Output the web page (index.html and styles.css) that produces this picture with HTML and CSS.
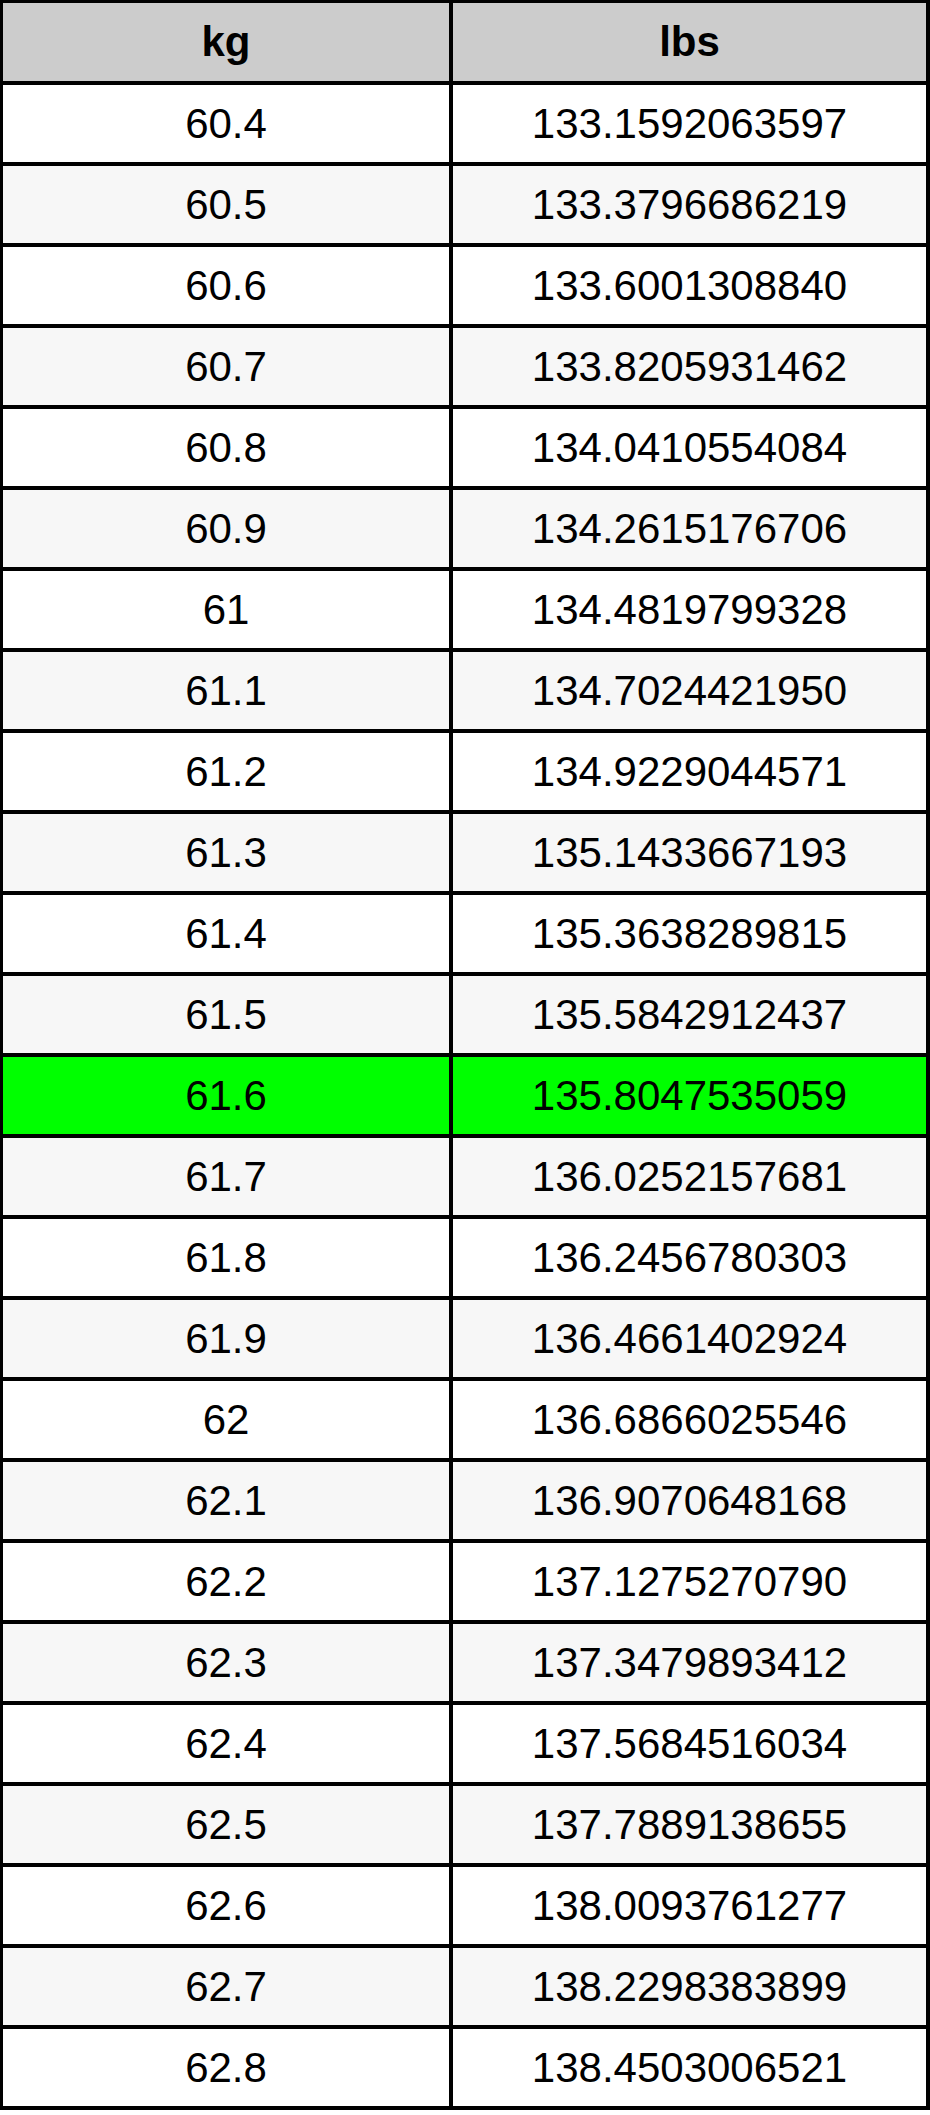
FILE: index.html
```html
<!DOCTYPE html>
<html>
<head>
<meta charset="utf-8">
<link rel="stylesheet" href="styles.css">
</head>
<body>
<div class="table">
  <div class="cell head">kg</div><div class="cell head">lbs</div>
  <div class="cell odd">60.4</div><div class="cell odd">133.1592063597</div>
  <div class="cell even">60.5</div><div class="cell even">133.3796686219</div>
  <div class="cell odd">60.6</div><div class="cell odd">133.6001308840</div>
  <div class="cell even">60.7</div><div class="cell even">133.8205931462</div>
  <div class="cell odd">60.8</div><div class="cell odd">134.0410554084</div>
  <div class="cell even">60.9</div><div class="cell even">134.2615176706</div>
  <div class="cell odd">61</div><div class="cell odd">134.4819799328</div>
  <div class="cell even">61.1</div><div class="cell even">134.7024421950</div>
  <div class="cell odd">61.2</div><div class="cell odd">134.9229044571</div>
  <div class="cell even">61.3</div><div class="cell even">135.1433667193</div>
  <div class="cell odd">61.4</div><div class="cell odd">135.3638289815</div>
  <div class="cell even">61.5</div><div class="cell even">135.5842912437</div>
  <div class="cell hl">61.6</div><div class="cell hl">135.8047535059</div>
  <div class="cell even">61.7</div><div class="cell even">136.0252157681</div>
  <div class="cell odd">61.8</div><div class="cell odd">136.2456780303</div>
  <div class="cell even">61.9</div><div class="cell even">136.4661402924</div>
  <div class="cell odd">62</div><div class="cell odd">136.6866025546</div>
  <div class="cell even">62.1</div><div class="cell even">136.9070648168</div>
  <div class="cell odd">62.2</div><div class="cell odd">137.1275270790</div>
  <div class="cell even">62.3</div><div class="cell even">137.3479893412</div>
  <div class="cell odd">62.4</div><div class="cell odd">137.5684516034</div>
  <div class="cell even">62.5</div><div class="cell even">137.7889138655</div>
  <div class="cell odd">62.6</div><div class="cell odd">138.0093761277</div>
  <div class="cell even">62.7</div><div class="cell even">138.2298383899</div>
  <div class="cell odd">62.8</div><div class="cell odd">138.4503006521</div>
</div>
</body>
</html>
```
FILE: styles.css
```css
html, body {
  margin: 0;
  padding: 0;
  background: #ffffff;
}

.table {
  display: grid;
  grid-template-columns: 446px 473px;
  grid-template-rows: 78px;
  grid-auto-rows: 77px;
  gap: 4px;
  padding: 3px 4px 4px 3px;
  background: #000000;
  width: max-content;
  font-family: "Liberation Sans", Arial, sans-serif;
  font-size: 42px;
  color: #000000;
}

.cell {
  display: flex;
  align-items: center;
  justify-content: center;
  line-height: 1;
}

.head {
  background: #cccccc;
  font-weight: bold;
}

.odd {
  background: #ffffff;
}

.even {
  background: #f7f7f7;
}

.hl {
  background: #00ff00;
}
```
